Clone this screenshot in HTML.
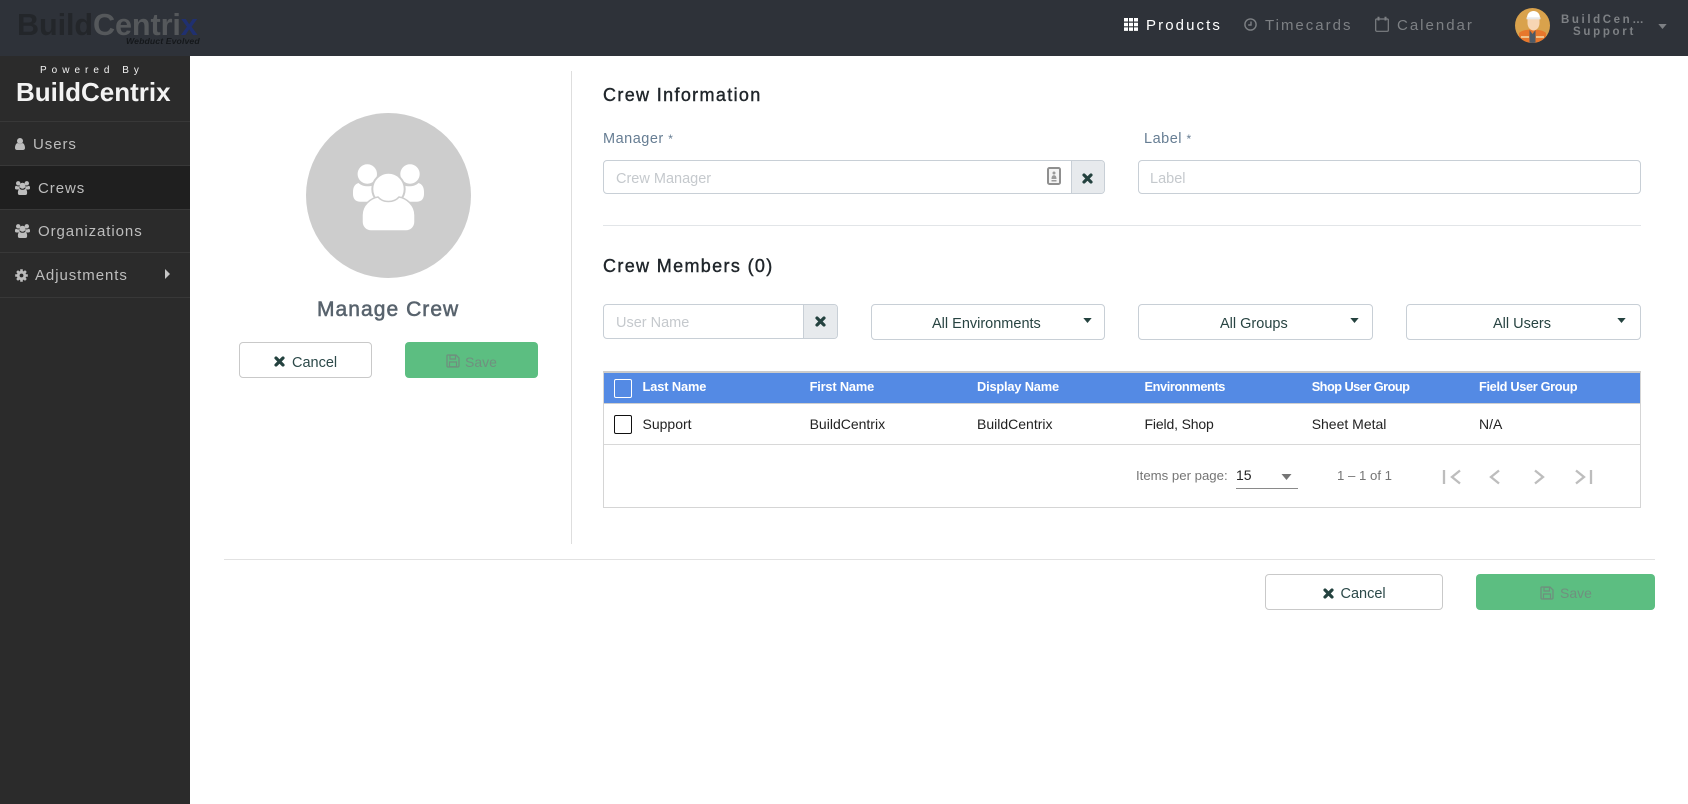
<!DOCTYPE html>
<html lang="en">
<head>
<meta charset="utf-8">
<title>Manage Crew</title>
<style>
html,body{margin:0;padding:0;width:1688px;height:804px;overflow:hidden;background:#fff;font-family:"Liberation Sans",sans-serif}
.a{position:absolute;white-space:nowrap}
.t{position:absolute;white-space:nowrap;height:20px;line-height:20px}
.bx{position:absolute;box-sizing:border-box}
#top{left:0;top:0;width:1688px;height:56px;background:#2e3239}
#side{left:0;top:56px;width:190px;height:748px;background:#2b2b2b}
.line{position:absolute;left:0;width:190px;height:1px;background:#383838}
.nav{font-size:15px;letter-spacing:.93px;color:#bdbdbd}
.tn{font-size:15px;letter-spacing:2px;color:#7d8084}
.h{font-size:18px;letter-spacing:1.35px;color:#20262b;-webkit-text-stroke:.4px #20262b}
.lb{font-size:14.5px;letter-spacing:.5px;color:#667d93}
.ph{font-size:14.5px;color:#c5c9cd}
.inp{border:1px solid #c8cfd6;border-radius:4px;background:#fff}
.add{background:#e7eaed;border-left:1px solid #c8cfd6}
.sel{font-size:14.5px;color:#284442}
.th{font-size:12.8px;font-weight:bold;color:#fff}
.td{font-size:14px;color:#222}
.cb{position:absolute;box-sizing:border-box;width:18px;height:19px;border-radius:2px}
.btn{position:absolute;box-sizing:border-box;border-radius:4px}
.c{border:1px solid #c9c9c9;background:#fff}
.s{background:#5cbe81}
.ct{font-size:14.5px;color:#2c4949}
.st{font-size:14px;color:#70907f}
.pg{font-size:13.2px;color:#757575}
</style>
</head>
<body>
<svg width="0" height="0" style="position:absolute">
<defs>
<symbol id="grp" viewBox="351 163 75 69">
<circle cx="367.3" cy="174" r="9.7"/><circle cx="410" cy="174" r="9.7"/>
<path d="M353 192C353 187 355 184 358.500 183C362 186.500 368 187 373 185.500L376 198L367 201.700H360C355 201.700 353 198 353 194Z"/>
<path d="M424 192C424 187 422 184 418.500 183C415 186.500 409 187 404 185.500L401 198L410 201.700H417C422 201.700 424 198 424 194Z"/>
<circle cx="388.500" cy="189" r="16.200" style="stroke:var(--g);stroke-width:2"/>
<path d="M362 222V215C362 205 371 198 378 197C383 203 394 203 399 197C406 198 415 205 415 215V222C415 227 411 231 406 231H371C366 231 362 227 362 222Z" style="stroke:var(--g);stroke-width:1.500"/>
</symbol>
<symbol id="grs" viewBox="0 0 15 14">
<circle cx="3.200" cy="2.300" r="2.200"/><circle cx="11.800" cy="2.300" r="2.200"/>
<path d="M0 6.500C0 5 .8 4.700 1.500 4.700C2.500 5.500 3.500 5.500 4.500 5.200L4.800 8.500H1.500C.5 8.500 0 8 0 7.300ZM15 6.500C15 5 14.200 4.700 13.500 4.700C12.500 5.500 11.500 5.500 10.500 5.200L10.200 8.500H13.500C14.500 8.500 15 8 15 7.300Z"/>
<circle cx="7.500" cy="4.700" r="3"/>
<path d="M2.900 12.200V11C2.900 9.300 4 8.200 5 8C6.300 9 8.700 9 10 8C11 8.200 12.100 9.300 12.100 11V12.200C12.100 13.300 11.400 14 10.300 14H4.700C3.600 14 2.900 13.300 2.900 12.200Z"/>
</symbol>
<symbol id="x" viewBox="0 0 12 12">
<path d="M2.200 2.200L9.800 9.800M9.800 2.200L2.200 9.800" stroke="currentColor" stroke-width="3.500" stroke-linecap="round" fill="none"/>
</symbol>
<symbol id="fl" viewBox="0 0 14 14">
<path d="M1.700 1H10L13 4V11.800C13 12.500 12.500 13 11.800 13H2C1.300 13 1 12.500 1 11.800V2C1 1.300 1.300 1 1.700 1Z" fill="none" stroke="currentColor" stroke-width="1.300"/>
<path d="M4 1.300H9.500V5H4ZM3.500 8H10.500V12.700H3.500Z" fill="none" stroke="currentColor" stroke-width="1.200"/>
</symbol>
<symbol id="ar" viewBox="0 0 10 6"><path d="M0 0H10L5 6Z" fill="currentColor"/></symbol>
</defs>
</svg>

<div class="a" id="top"></div>
<div class="t" style="left:17px;top:7px;height:36px;line-height:36px;font-size:30.600px;font-weight:bold;letter-spacing:-.1px"><span style="color:#23262a">Build</span><span style="color:#55585b">Centri</span><span style="color:#203070">x</span></div>
<div class="t" style="left:126px;top:31px;font-size:8.700px;font-style:italic;font-weight:bold;color:#15181b;letter-spacing:.1px">Webduct Evolved</div>

<svg class="a" style="left:1124px;top:18px" width="14" height="13" viewBox="0 0 14 13" fill="#fff"><path d="M0 0h4v3.500H0zM5 0h4v3.500H5zM10 0h4v3.500h-4zM0 4.700h4v3.500H0zM5 4.700h4v3.500H5zM10 4.700h4v3.500h-4zM0 9.400h4v3.500H0zM5 9.400h4v3.500H5zM10 9.400h4v3.500h-4z"/></svg>
<div class="t tn" style="left:1146px;top:16px;color:#fff;letter-spacing:2.1px">Products</div>
<svg class="a" style="left:1244px;top:18px" width="13" height="13" viewBox="0 0 13 13" fill="none" stroke="#7d8084" stroke-width="1.400"><circle cx="6.500" cy="6.500" r="5.600"/><path d="M7 3.500V7H4.200"/></svg>
<div class="t tn" style="left:1265px;top:16px">Timecards</div>
<svg class="a" style="left:1375px;top:16px" width="14" height="16" viewBox="0 0 14 16" fill="none" stroke="#7d8084" stroke-width="1.200"><rect x=".7" y="3" width="12.600" height="12.300" rx="1"/><path d="M3.500 .8V4.500M10.500 .8V4.500" stroke-width="2"/></svg>
<div class="t tn" style="left:1397px;top:16px">Calendar</div>

<svg class="a" style="left:1515px;top:8px" width="35" height="35" viewBox="0 0 35 35">
<defs><clipPath id="av"><circle cx="17.500" cy="17.500" r="17.500"/></clipPath></defs>
<g clip-path="url(#av)">
<rect width="35" height="35" fill="#d9a24c"/>
<path d="M4 35V25C7 22.500 11 21.500 17.500 21.500S28 22.500 31 25V35Z" fill="#e8772c"/>
<path d="M6 29H14M21 29H29" stroke="#f2dca8" stroke-width="1.500"/>
<path d="M14.500 22L17.500 26L20.500 22V35H14.500Z" fill="#4e5a66"/>
<path d="M12.500 9H24.500V15C24.500 20 21 22.500 18.500 22.500S12.500 20 12.500 15Z" fill="#f7d6b4"/>
<path d="M12 10C12 5.500 15 3 18.500 3S25 5.500 25 10Z" fill="#fff"/>
<rect x="11.500" y="9.300" width="14" height="2" fill="#e8e8e8"/>
</g>
</svg>
<div class="t" style="left:1561px;top:10px;font-size:11.500px;font-weight:bold;letter-spacing:2.6px;color:#7d8084">BuildCen…</div>
<div class="t" style="left:1573px;top:22px;font-size:11.500px;font-weight:bold;letter-spacing:2.7px;color:#7d8084">Support</div>
<svg class="a" style="left:1658px;top:24px;color:#7d8084" width="9" height="5"><use href="#ar"/></svg>

<div class="a" id="side"></div>
<div class="a" style="left:0;top:165px;width:190px;height:44px;background:#1f1f1f"></div>
<div class="line" style="top:121px"></div>
<div class="line" style="top:165px"></div>
<div class="line" style="top:209px"></div>
<div class="line" style="top:252px"></div>
<div class="line" style="top:297px"></div>
<div class="t" style="left:40px;top:61px;font-size:10px;letter-spacing:5px;color:#f2f2f2">Powered By</div>
<div class="t" style="left:16px;top:78px;height:28px;line-height:28px;font-size:26px;font-weight:bold;color:#f3f3f3;letter-spacing:0">BuildCentrix</div>

<svg class="a" style="left:15px;top:138px" width="10" height="12" viewBox="0 0 10 12" fill="#bdbdbd"><circle cx="5" cy="3" r="3"/><path d="M0 10C0 7.500 1 5.500 2.500 5C4 6.500 6 6.500 7.500 5C9 5.500 10 7.500 10 10C10 11.300 9 12 8 12H2C1 12 0 11.300 0 10Z"/></svg>
<div class="t nav" style="left:33px;top:135px">Users</div>
<svg class="a" style="left:15px;top:181px;fill:#bdbdbd" width="15" height="14"><use href="#grs"/></svg>
<div class="t nav" style="left:38px;top:179px">Crews</div>
<svg class="a" style="left:15px;top:224px;fill:#bdbdbd" width="15" height="14"><use href="#grs"/></svg>
<div class="t nav" style="left:38px;top:222px">Organizations</div>
<svg class="a" style="left:15px;top:269px" width="13" height="13" viewBox="0 0 13 13"><circle cx="6.500" cy="6.500" r="4.700" fill="#bdbdbd"/><g stroke="#bdbdbd" stroke-width="2.600"><path d="M6.500 .2V12.800M.2 6.500H12.800M2.100 2.100L10.900 10.900M10.900 2.100L2.100 10.900"/></g><circle cx="6.500" cy="6.500" r="1.900" fill="#2b2b2b"/></svg>
<div class="t nav" style="left:35px;top:266px">Adjustments</div>
<svg class="a" style="left:165px;top:269px" width="5" height="10" viewBox="0 0 5 10"><path d="M0 0L5 5L0 10Z" fill="#c6c6c6"/></svg>

<!-- left column -->
<div class="bx" style="left:306px;top:113px;width:165px;height:165px;border-radius:50%;background:#cdcdcd"></div>
<svg class="a" style="left:351px;top:163px;--g:#cdcdcd;fill:#fff" width="75" height="69"><use href="#grp"/></svg>
<div class="t" style="left:317px;top:300px;font-size:21px;letter-spacing:1.050px;color:#58636d;-webkit-text-stroke:.55px #58636d">Manage Crew</div>
<div class="btn c" style="left:239px;top:342px;width:133px;height:36px"></div>
<svg class="a" style="left:274px;top:356px;color:#24423f" width="11" height="11"><use href="#x"/></svg>
<div class="t ct" style="left:292px;top:352.500px;line-height:21px">Cancel</div>
<div class="btn s" style="left:405px;top:342px;width:133px;height:36px"></div>
<svg class="a" style="left:446px;top:354px;color:#6f8f7e" width="14" height="14"><use href="#fl"/></svg>
<div class="t st" style="left:465px;top:352px;line-height:21px">Save</div>
<div class="a" style="left:571px;top:71px;width:1px;height:473px;background:#dedede"></div>

<!-- crew info -->
<div class="t h" style="left:603px;top:85px">Crew Information</div>
<div class="t lb" style="left:603px;top:129px">Manager <span style="font-size:12px;letter-spacing:0">*</span></div>
<div class="bx inp" style="left:603px;top:160px;width:502px;height:34px;overflow:hidden"><div class="bx add" style="left:467px;top:0;width:35px;height:34px"></div></div>
<div class="t ph" style="left:616px;top:169px">Crew Manager</div>
<svg class="a" style="left:1047px;top:167px" width="14" height="18" viewBox="0 0 14 18"><rect x="1" y="1" width="12" height="16" rx="1.500" fill="#f4f4f4" stroke="#8f8f8f" stroke-width="2"/><circle cx="7" cy="6" r="1.500" fill="#9a9a9a"/><path d="M4.500 12C4.500 9.500 5.500 8.300 7 8.300S9.500 9.500 9.500 12ZM4.500 13H9.500V14.500H4.500Z" fill="#9a9a9a"/></svg>
<svg class="a" style="left:1082px;top:173px;color:#24423f" width="11" height="11"><use href="#x"/></svg>
<div class="t lb" style="left:1144px;top:129px">Label <span style="font-size:12px;letter-spacing:0">*</span></div>
<div class="bx inp" style="left:1138px;top:160px;width:503px;height:34px"></div>
<div class="t ph" style="left:1150px;top:169px">Label</div>

<div class="a" style="left:603px;top:225px;width:1038px;height:1px;background:#e2e5e8"></div>

<div class="t h" style="left:603px;top:256px">Crew Members (0)</div>
<div class="bx inp" style="left:603px;top:304px;width:235px;height:35px;overflow:hidden"><div class="bx add" style="left:199px;top:0;width:36px;height:35px"></div></div>
<div class="t ph" style="left:616px;top:313px;line-height:21px">User Name</div>
<svg class="a" style="left:815px;top:316px;color:#24423f" width="11" height="11"><use href="#x"/></svg>

<div class="bx inp" style="left:871px;top:304px;width:234px;height:36px"></div>
<div class="t sel" style="left:932px;top:314px;line-height:21px">All Environments</div>
<svg class="a" style="left:1083px;top:318px;color:#24423f" width="9" height="5"><use href="#ar"/></svg>
<div class="bx inp" style="left:1138px;top:304px;width:235px;height:36px"></div>
<div class="t sel" style="left:1220px;top:314px;line-height:21px">All Groups</div>
<svg class="a" style="left:1350px;top:318px;color:#24423f" width="9" height="5"><use href="#ar"/></svg>
<div class="bx inp" style="left:1406px;top:304px;width:235px;height:36px"></div>
<div class="t sel" style="left:1493px;top:314px;line-height:21px">All Users</div>
<svg class="a" style="left:1617px;top:318px;color:#24423f" width="9" height="5"><use href="#ar"/></svg>

<!-- table -->
<div class="bx" style="left:603px;top:371px;width:1038px;height:137px;border:1px solid #d5d5d5;border-top:2px solid #cbcbcb"></div>
<div class="a" style="left:604px;top:372.500px;width:1036px;height:30px;background:#548ae4;border-bottom:1px solid #cfcfcf"></div>
<div class="a" style="left:604px;top:444px;width:1036px;height:1px;background:#d8d8d8"></div>
<div class="cb" style="left:613.500px;top:378.500px;border:1px solid #fff"></div>
<div class="cb" style="left:613.500px;top:415px;border:1.500px solid #111"></div>
<div class="t th" style="left:642.500px;top:377px;letter-spacing:-.1px">Last Name</div>
<div class="t th" style="left:809.600px;top:377px;letter-spacing:-.17px">First Name</div>
<div class="t th" style="left:977px;top:377px;letter-spacing:-.17px">Display Name</div>
<div class="t th" style="left:1144.500px;top:377px;letter-spacing:-.4px">Environments</div>
<div class="t th" style="left:1311.700px;top:377px;letter-spacing:-.55px">Shop User Group</div>
<div class="t th" style="left:1479px;top:377px;letter-spacing:-.35px">Field User Group</div>
<div class="t td" style="left:642.500px;top:414px">Support</div>
<div class="t td" style="left:809.600px;top:414px">BuildCentrix</div>
<div class="t td" style="left:977px;top:414px">BuildCentrix</div>
<div class="t td" style="left:1144.500px;top:414px;letter-spacing:-.15px">Field, Shop</div>
<div class="t td" style="left:1311.700px;top:414px">Sheet Metal</div>
<div class="t td" style="left:1479px;top:414px">N/A</div>

<div class="t pg" style="left:1136px;top:466px">Items per page:</div>
<div class="t pg" style="left:1236px;top:465px;color:#222;font-size:14px">15</div>
<div class="a" style="left:1236px;top:488px;width:62px;height:1px;background:#8a8a8a"></div>
<svg class="a" style="left:1281px;top:474px;color:#757575" width="11" height="6"><use href="#ar"/></svg>
<div class="t pg" style="left:1337px;top:466px">1 – 1 of 1</div>
<svg class="a" style="left:1442px;top:468px" width="152" height="18" viewBox="0 0 152 18" fill="none" stroke="#bdbdbd" stroke-width="2.300"><path d="M2 2V16M18 2.500L10 9L18 15.500"/><path d="M57 2.500L49 9L57 15.500"/><path d="M93 2.500L101 9L93 15.500"/><path d="M134 2.500L142 9L134 15.500M149 2V16"/></svg>

<!-- footer -->
<div class="a" style="left:224px;top:559px;width:1431px;height:1px;background:#e2e2e2"></div>
<div class="btn c" style="left:1265px;top:574px;width:178px;height:36px"></div>
<svg class="a" style="left:1323px;top:588px;color:#24423f" width="11" height="11"><use href="#x"/></svg>
<div class="t ct" style="left:1340.500px;top:583.500px;line-height:21px">Cancel</div>
<div class="btn s" style="left:1476px;top:574px;width:179px;height:36px"></div>
<svg class="a" style="left:1540px;top:586px;color:#6f8f7e" width="14" height="14"><use href="#fl"/></svg>
<div class="t st" style="left:1560px;top:583px;line-height:21px">Save</div>
</body>
</html>
